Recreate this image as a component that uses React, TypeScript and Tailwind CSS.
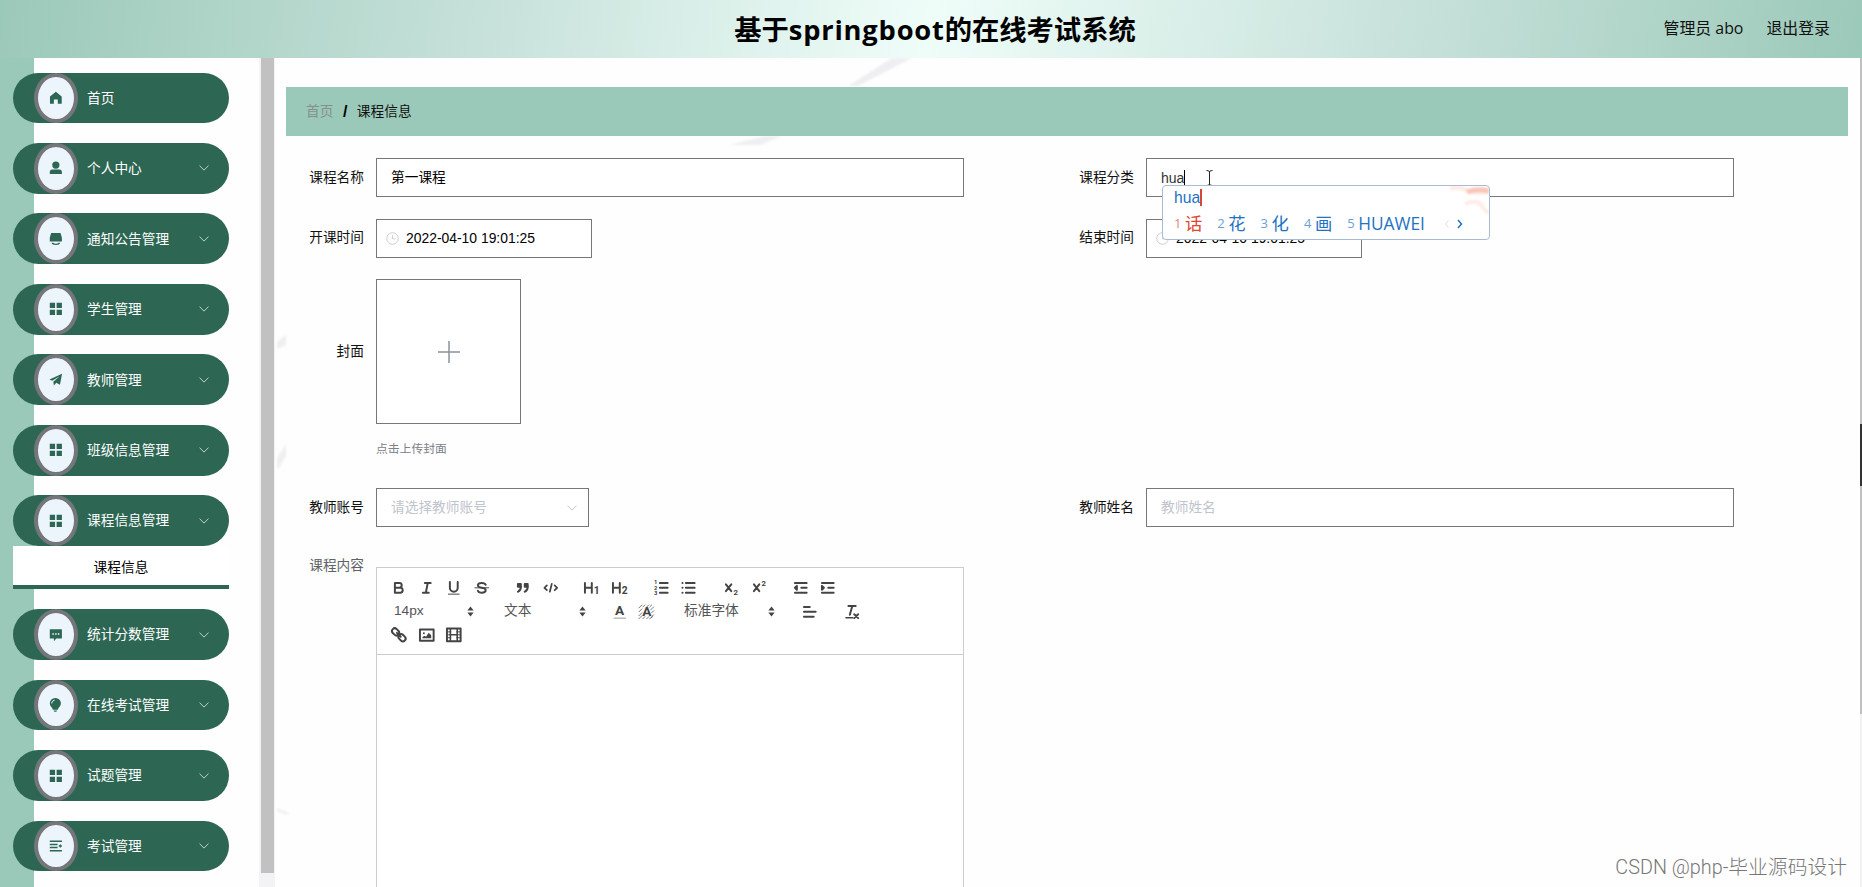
import type { ReactNode } from "react";
import clsx from "clsx";

const MENU = [
  { label: "首页", icon: "home", arrow: false },
  { label: "个人中心", icon: "user", arrow: true },
  { label: "通知公告管理", icon: "notice", arrow: true },
  { label: "学生管理", icon: "grid", arrow: true },
  { label: "教师管理", icon: "plane", arrow: true },
  { label: "班级信息管理", icon: "grid", arrow: true },
  { label: "课程信息管理", icon: "grid", arrow: true, child: "课程信息" },
  { label: "统计分数管理", icon: "chat", arrow: true },
  { label: "在线考试管理", icon: "bulb", arrow: true },
  { label: "试题管理", icon: "grid", arrow: true },
  { label: "考试管理", icon: "lines", arrow: true },
];

const CANDIDATES = ["话", "花", "化", "画", "HUAWEI"];

function MenuIcon({ name }: { name: string }) {
  const shapes: Record<string, ReactNode> = {
    home: <path d="M7 .8 13 5.6V13H9V8.6H5V13H1V5.6z" />,
    user: (
      <>
        <circle cx="7" cy="4.2" r="3.7" />
        <path d="M.8 13.2v-2q0-2.4 2.6-2.4h7.2q2.6 0 2.6 2.4v2z" />
      </>
    ),
    notice: (
      <>
        <path d="M2.2 1h9.6l1.4 5v3.6H.8V6z" />
        <path d="M2.6 11h1.9q.4.9 2.500.9t2.500-.9h1.900q-.5 2.300-4.400 2.300T2.600 11z" />
      </>
    ),
    grid: <path d="M.8.8h5.4v5.4H.8zM7.8.8h5.4v5.4H7.8zM.8 7.8h5.4v5.4H.8zM7.8 7.8h5.4v5.4H7.8z" />,
    plane: <path d="M13.4.8 11.2 12 7.4 10 5 12.9 4.4 8.9 11 3.2 3.2 8 .5 6.7z" />,
    chat: (
      <>
        <path d="M.8 1.4h12.4v9.4H7.4L5 13.6v-2.8H.8z" />
        <path d="M3.4 5.4H5v1.5H3.4zM6.2 5.4h1.6v1.5H6.2zM9 5.4h1.6v1.5H9z" fill="#ecf4fc" />
      </>
    ),
    bulb: (
      <>
        <path d="M6.500 0a5.600 5.600 0 0 1 5.700 5.600C12.200 8.300 9.600 9.300 9 12H4C3.400 9.300.8 8.300.8 5.600A5.600 5.600 0 0 1 6.500 0zM4.700 12.800h3.600L7.500 14h-2z" />
        <path d="M2.700 5.600Q3 2.700 5.800 2" stroke="#ecf4fc" fill="none" />
      </>
    ),
    lines: (
      <>
        <path d="M.8 1.600h12.400v1.500H.8zM.8 4.800h8v1.500h-8zM.8 8h8v1.500h-8zM.8 11.200h12.400v1.500H.8z" />
        <path d="m9.600 7.200 2.400-2.100v1.300h1.200V8H12v1.300z" />
      </>
    ),
  };
  return (
    <svg viewBox="0 0 14 14" className="size-[13.7px] fill-[#2d6753]">
      {shapes[name]}
    </svg>
  );
}

function Chevron({ className }: { className?: string }) {
  return (
    <svg viewBox="0 0 10 6" className={clsx("h-[6px] w-[10px] fill-none", className)}>
      <path d="M.5.6 5 5.1 9.5.6" />
    </svg>
  );
}

function Sidebar() {
  return (
    <aside className="flex w-[275px] shrink-0 justify-between bg-[linear-gradient(to_right,#9bc9b9_34px,#fefefe_34px)] pl-[13px]">
      <ul className="w-[216px] pt-[14.5px]">
        {MENU.map((item) => (
          <li key={item.label} className="mb-[19.8px]">
            <div className="flex h-[50.7px] items-center rounded-full bg-[#2d6753] pl-[20.5px] pr-[20.5px] text-white">
              <span className="flex h-[50.7px] w-[44px] items-center justify-center rounded-[50%] border-4 border-[#74767a] bg-[#ecf4fc]">
                <MenuIcon name={item.icon} />
              </span>
              <span className="ml-[9.5px] flex-1 whitespace-nowrap pt-[2px] text-[13.7px]">{item.label}</span>
              {item.arrow && <Chevron className="stroke-[#b9d3c9]" />}
            </div>
            {item.child && (
              <div className="flex h-[43.4px] items-center justify-center border-b-4 border-[#2d6753] bg-white pt-[5px] text-[13.7px] text-black">
                {item.child}
              </div>
            )}
          </li>
        ))}
      </ul>
      <div className="w-[16px] bg-[#f3f3f5] pl-[1.5px]">
        <div className="h-[815px] w-[13px] bg-[#c1c1c1]" />
      </div>
    </aside>
  );
}

function Clock() {
  return (
    <svg viewBox="0 0 14 14" className="size-[13px] fill-none stroke-[#c6c9d1]">
      <circle cx="7" cy="7" r="6.2" />
      <path d="M7 3.4V7.3h3.4" />
    </svg>
  );
}

function Field({ label, children, faded }: { label: string; children: ReactNode; faded?: boolean }) {
  return (
    <div className="flex w-[770px]">
      <span
        className={clsx(
          "mr-3 w-[78px] shrink-0 self-center pt-[1px] text-right text-[13.7px]",
          faded ? "text-[#606266]" : "text-[#111]"
        )}
      >
        {label}
      </span>
      {children}
    </div>
  );
}

function Input({ className, children }: { className?: string; children: ReactNode }) {
  return (
    <div className={clsx("flex h-[39px] items-center border border-[#76777a] bg-white pt-[1px]", className)}>
      {children}
    </div>
  );
}

function ToolIcon({ children }: { children: ReactNode }) {
  return (
    <span className="flex w-[27.5px] justify-center">
      <svg
        viewBox="0 0 18 18"
        className="size-[17.6px] overflow-visible fill-none stroke-[#444] stroke-2 [stroke-linecap:round] [stroke-linejoin:round]"
      >
        {children}
      </svg>
    </span>
  );
}

function Letter({ x, y, size, children }: { x: number; y: number; size: number; children: string }) {
  return (
    <text x={x} y={y} fontSize={size} className="fill-[#444] stroke-none font-[Roboto] font-bold">
      {children}
    </text>
  );
}

function Picker({ label, className }: { label: string; className: string }) {
  return (
    <span className={clsx("flex items-center justify-between text-[13.7px] text-[#555]", className)}>
      {label}
      <svg viewBox="0 0 8 12" className="h-[11px] w-[7px] fill-[#444]">
        <path d="M4 .2 7.6 4.8H.4zM4 11.8.4 7.2h7.2z" />
      </svg>
    </span>
  );
}

function Editor() {
  return (
    <div className="flex h-[330px] w-[588px] flex-col self-start border border-[#ccc] bg-white">
      <div className="h-[87px] border-b border-[#ccc] pl-[8.5px] pt-[8.5px]">
        <div className="flex h-[23.5px] items-center">
          <ToolIcon>
            <path d="M5 4h4.5a2.5 2.5 0 0 1 0 5H5zM5 9h5.5a2.5 2.5 0 0 1 0 5H5z" />
          </ToolIcon>
          <ToolIcon>
            <path d="M7 4h6M5 14h6M8 14l2-10" />
          </ToolIcon>
          <ToolIcon>
            <path d="M5 3v6a4 4 0 0 0 8 0V3" />
            <path d="M3.5 15.5h11" className="stroke-1" />
          </ToolIcon>
          <ToolIcon>
            <path d="M13 6c-.4-1.2-2-2-4-2-2.3 0-4 1-4 2.5S6.500 8.700 9 9s4 1 4 2.500S11.300 14 9 14c-2 0-3.600-.8-4-2" />
            <path d="M2 9h14" className="stroke-1" />
          </ToolIcon>
          <span className="w-[14px]" />
          <ToolIcon>
            <path d="M4 5h3v3H4zM11 5h3v3h-3z" className="fill-[#444]" />
            <path d="M7 8c0 4-3 5-3 5M14 8c0 4-3 5-3 5" />
          </ToolIcon>
          <ToolIcon>
            <path d="M5 6.500 2.500 9 5 11.500M13 6.500 15.500 9 13 11.500M10 5 8 13" className="[stroke-width:1.800]" />
          </ToolIcon>
          <span className="w-[14px]" />
          <ToolIcon>
            <path d="M2 4v10M9 4v10M2 9h7" />
            <Letter x={11} y={15} size={10.5}>1</Letter>
          </ToolIcon>
          <ToolIcon>
            <path d="M2 4v10M9 4v10M2 9h7" />
            <Letter x={11} y={15} size={10.5}>2</Letter>
          </ToolIcon>
          <span className="w-[14.5px]" />
          <ToolIcon>
            <path d="M7 4h8M7 9h8M7 14h8" />
            <Letter x={1} y={5.5} size={6}>1</Letter>
            <Letter x={1} y={11} size={6}>2</Letter>
            <Letter x={1} y={16.5} size={6}>3</Letter>
          </ToolIcon>
          <ToolIcon>
            <path d="M6 4h9M6 9h9M6 14h9M2.500 4h.1M2.500 9h.1M2.500 14h.1" />
          </ToolIcon>
          <span className="w-[14.5px]" />
          <ToolIcon>
            <path d="m4 5.500 5.500 7M9.500 5.500 4 12.500" />
            <Letter x={11.8} y={16} size={8}>2</Letter>
          </ToolIcon>
          <ToolIcon>
            <path d="m4 5.500 5.500 7M9.500 5.500 4 12.500" />
            <Letter x={11.8} y={7} size={8}>2</Letter>
          </ToolIcon>
          <span className="w-[14.5px]" />
          <ToolIcon>
            <path d="M3 14h12M3 4h12M9.500 9H15" />
            <path d="M5 7v4L3 9z" className="fill-[#444]" />
          </ToolIcon>
          <ToolIcon>
            <path d="M3 14h12M3 4h12M9.500 9H15" />
            <path d="M3 7v4l2-2z" className="fill-[#444]" />
          </ToolIcon>
        </div>
        <div className="flex h-[23.5px] items-center">
          <Picker label="14px" className="ml-[8.5px] w-[80px]" />
          <Picker label="文本" className="ml-[30px] w-[81.5px]" />
          <span className="w-[20.5px]" />
          <ToolIcon>
            <path d="M3 15.5h12" className="stroke-[#999] stroke-1" />
            <Letter x={4.2} y={12.3} size={14}>A</Letter>
          </ToolIcon>
          <ToolIcon>
            <path
              d="M1 5 4 2M1 9l3-3M1 13l3-3M1 16l3-3M5 4l2-2M9 4l2-2M12 4l2-2M13 7l3-3M14 10l2-2M14 14l2-2M5 16l2-2M9 16l2-2M12 16l3-2"
              className="stroke-[#777] stroke-1"
            />
            <Letter x={4.3} y={13.5} size={14}>A</Letter>
          </ToolIcon>
          <Picker label="标准字体" className="ml-[23px] w-[90.5px]" />
          <span className="ml-[21.5px] flex">
            <ToolIcon>
              <path d="M3 9h12M3 14h10M3 4h6" />
            </ToolIcon>
          </span>
          <span className="ml-[14.5px] flex">
            <ToolIcon>
              <path d="M5.5 3H13M9.500 3 7 12" />
              <path d="M3 15h7" className="[stroke-width:1.500]" />
              <path d="m11.500 11.500 4 4M15.500 11.500l-4 4" />
            </ToolIcon>
          </span>
        </div>
        <div className="flex h-[23.5px] items-center">
          <ToolIcon>
            <rect x="1.700" y="3.200" width="8" height="5.600" rx="2.800" transform="rotate(45 5.700 6)" />
            <rect x="8.300" y="9.200" width="8" height="5.600" rx="2.800" transform="rotate(45 12.300 12)" />
            <path d="m7 7 4 4" />
          </ToolIcon>
          <ToolIcon>
            <path d="M2 3.500h14v11.500H2z" />
            <circle cx="6" cy="7.500" r="1" className="fill-[#444] stroke-none" />
            <path d="M4.500 12.500v-1l2-1.500 1.700 1L11 7l2.500 2.500v3z" className="fill-[#444] stroke-none" />
          </ToolIcon>
          <ToolIcon>
            <path d="M2 2.500h14v13H2z" />
            <path d="M5.500 3v12M12.500 3v12M6 9h6" className="[stroke-width:1.600]" />
            <path d="M3 6h3M3 9h3M3 12h3M12 6h3M12 9h3M12 12h3" className="stroke-1" />
          </ToolIcon>
        </div>
      </div>
    </div>
  );
}

// Candidate window that floats over the form while typing
function ImePopup() {
  return (
    <div className="absolute left-[16px] top-[27px] z-10 h-[55px] w-[328px] overflow-hidden rounded border border-[#a9bcd4] bg-white text-[#2272c3]">
      <svg viewBox="0 0 40 32" className="absolute right-0 top-0 h-[32px] w-[40px] fill-none blur-[1px]">
        <path d="M1 3q8-3 16 1T40 6" stroke="#fdeae5" strokeWidth="4" />
        <path d="M18 6q11-4 22-1" stroke="#f9c4b7" strokeWidth="5" />
        <path d="M16 18q12-5 16 1t8 8" stroke="#fdece8" strokeWidth="4" />
      </svg>
      <div className="flex h-[23px] items-center pl-[11px] text-[15.7px]">
        hua
        <span className="h-[17px] w-[1.5px] bg-[#dc4630]" />
      </div>
      <div className="flex h-[30px] items-center pl-[11px] font-['Open_Sans','Noto_Sans_CJK_SC',sans-serif]">
        {CANDIDATES.map((word, i) => (
          <span
            key={word}
            className={clsx("mr-[15px] flex items-center whitespace-nowrap", i === 0 && "text-[#e0452f]")}
          >
            <span className={clsx("w-[11px] text-[13px]", i === 0 ? "text-[#e88475]" : "text-[#6ba0d6]")}>
              {i + 1}
            </span>
            <span className="text-[17.300px] leading-none">{word}</span>
          </span>
        ))}
        <svg viewBox="0 0 20 10" className="ml-[4px] h-[10px] w-[20px] fill-none">
          <path d="M4.500 1.500 1.500 5l3 3.500" stroke="#d8dde5" />
          <path d="m14 1 3.500 4L14 9" stroke="#2272c3" strokeWidth="1.500" />
        </svg>
      </div>
    </div>
  );
}

function CourseForm() {
  return (
    <div className="mt-[22px]">
      <div className="flex">
        <Field label="课程名称">
          <Input className="w-[588px] pl-[14px] text-[13.7px]">第一课程</Input>
        </Field>
        <Field label="课程分类">
          <div className="relative">
            <Input className="w-[588px] pl-[14px] text-[14px] text-[#333]">
              hua
              <span className="h-[16px] w-px bg-black" />
              <svg viewBox="0 0 7 16" className="ml-[21px] h-[16px] w-[7px] fill-none stroke-[#222]">
                <path d="M.5.5Q3.500.5 3.500 2V14Q3.500 15.500.5 15.500M6.500.5Q3.500.5 3.500 2M3.500 14q0 1.500 3 1.500" />
              </svg>
            </Input>
            <ImePopup />
          </div>
        </Field>
      </div>
      <div className="mt-[21.5px] flex">
        <Field label="开课时间">
          <Input className="w-[216px] gap-[7px] pl-[9px] text-[13.9px]">
            <Clock />
            2022-04-10 19:01:25
          </Input>
        </Field>
        <Field label="结束时间">
          <Input className="w-[216px] gap-[7px] pl-[9px] text-[13.9px]">
            <Clock />
            2022-04-10 19:01:25
          </Input>
        </Field>
      </div>
      <div className="mt-[21.5px]">
        <Field label="封面">
          <div className="flex size-[145px] items-center justify-center border border-[#76777a] bg-white">
            <svg viewBox="0 0 22 22" className="size-[22px] stroke-[#8c939d] [stroke-width:1.500]">
              <path d="M11 0v22M0 11h22" />
            </svg>
          </div>
        </Field>
        <p className="ml-[90px] mt-[15px] text-[11.8px] leading-5 text-[#7c8088]">点击上传封面</p>
      </div>
      <div className="mt-[29px] flex">
        <Field label="教师账号">
          <Input className="w-[213px] justify-between pl-[14px] pr-[11px] text-[13.7px] text-[#c0c4cc]">
            请选择教师账号
            <Chevron className="stroke-[#c0c4cc]" />
          </Input>
        </Field>
        <Field label="教师姓名">
          <Input className="w-[588px] pl-[14px] text-[13.7px] text-[#c0c4cc]">教师姓名</Input>
        </Field>
      </div>
      <div className="mt-[29px] flex">
        <span className="mr-3 w-[78px] text-right text-[13.7px] leading-5 text-[#606266]">课程内容</span>
        <div className="pt-[11px]">
          <Editor />
        </div>
      </div>
    </div>
  );
}

export default function App() {
  return (
    <div className="relative flex h-[887px] w-[1862px] flex-col overflow-hidden bg-[#fefefe] font-['Liberation_Sans','Noto_Sans_CJK_SC',sans-serif] text-black">
      <header className="flex h-[58px] shrink-0 items-center bg-[linear-gradient(100deg,#9bc9b9_0%,#c3dfd7_24%,#effdf9_50%,#c3dfd7_78%,#9bc9b9_100%)] font-['Open_Sans','Noto_Sans_CJK_SC',sans-serif]">
        <span className="flex-1" />
        <h1 className="whitespace-nowrap pl-[8px] pt-[2px] text-[27.3px] font-bold">
          基于<span className="tracking-[0.8px]">springboot</span>的在线考试系统
        </h1>
        <nav className="flex flex-1 justify-end text-[15.9px] text-[#111]">
          <span className="mr-[23px]">管理员 abo</span>
          <span className="mr-[32px]">退出登录</span>
        </nav>
      </header>
      <div className="flex min-h-0 flex-1">
        <Sidebar />
        <main className="relative flex-1 pl-[11px] pt-[29px]">
          <svg viewBox="0 0 1585 829" className="absolute left-0 top-0 h-[829px] w-[1585px] fill-[#efeff1] blur-[1px]">
            <path d="M617 0h20L583 28h-10zM490 78h17l-22 9h-30zM2 284l9-7v10l-9 4zM2 400l9-14v12l-7 12H2z" />
            <path d="m2 750 12 5-2 2-10-4z" />
          </svg>
          <div className="relative">
            <div className="flex h-[49px] w-[1562px] items-center bg-[#9bc9b9] pl-[20px] pt-[1px] text-[13.7px]">
              <span className="text-[#85908c]">首页</span>
              <span className="mx-[9.5px] text-[16px] font-bold leading-none">/</span>
              <span className="text-[#111]">课程信息</span>
            </div>
            <CourseForm />
          </div>
        </main>
        <div className="w-[2px] shrink-0 bg-[#f1f1f1]">
          <div className="h-[656px] bg-[#c1c1c1] pt-[366px]">
            <div className="h-[62px] bg-[#333]" />
          </div>
        </div>
      </div>
      <span className="absolute bottom-[5px] right-[15px] whitespace-nowrap font-['Roboto','Noto_Sans_CJK_SC',sans-serif] text-[19.8px] font-light leading-[28px] text-[#777]">
        CSDN @php-毕业源码设计
      </span>
    </div>
  );
}
